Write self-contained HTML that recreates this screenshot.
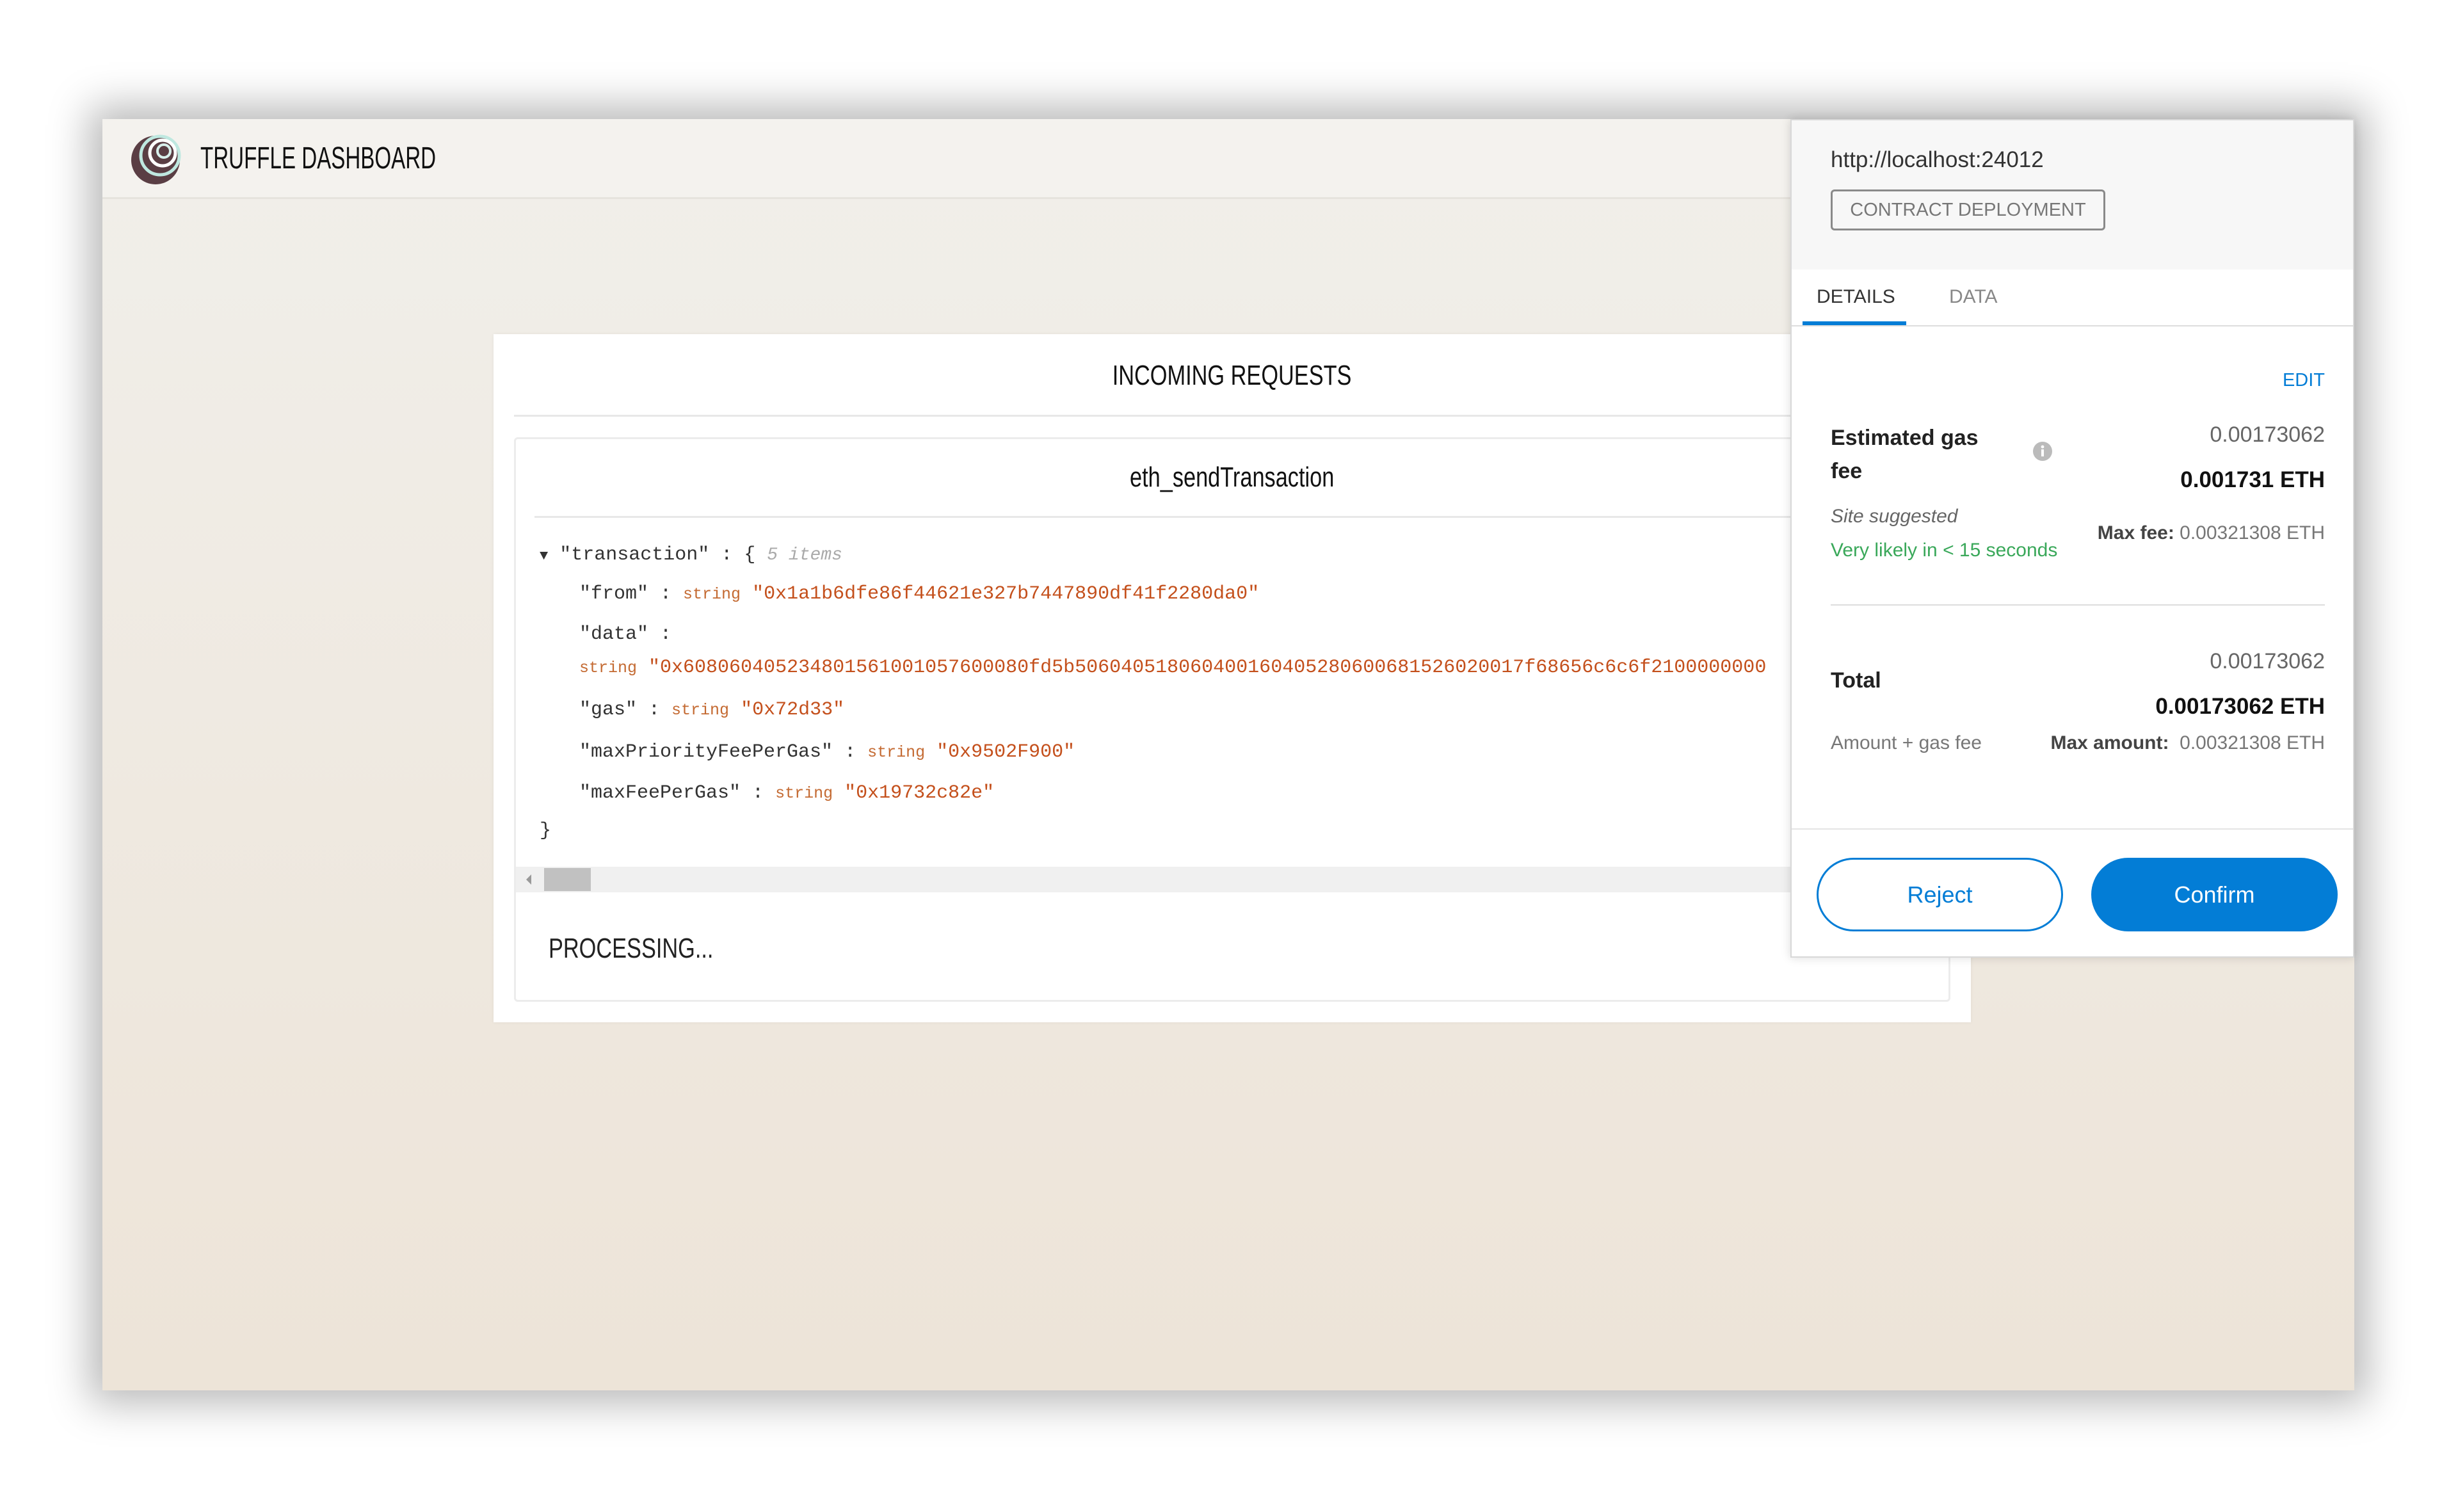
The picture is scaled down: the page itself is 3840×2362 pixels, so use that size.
<!DOCTYPE html>
<html><head><meta charset="utf-8">
<style>
*{margin:0;padding:0;box-sizing:border-box}
body{width:3840px;height:2362px;background:#fff;position:relative;overflow:hidden;font-family:"Liberation Sans",sans-serif}
.a{position:absolute;white-space:nowrap}
.win{position:absolute;left:160px;top:186px;width:3518px;height:1986px;background:linear-gradient(#f1efea,#ede4d8);box-shadow:0 0 60px 20px rgba(0,0,0,0.28)}
.hdr{position:absolute;left:160px;top:186px;width:3518px;height:125px;background:#f4f2ee;border-bottom:3px solid #e6e3dd}
.nar{font-family:"Liberation Sans",sans-serif}
.sq{display:inline-block;transform:scaleX(0.78);transform-origin:center}
.mono{font-family:"Liberation Mono",monospace;font-size:30px;line-height:40px;color:#333}
.s{color:#c46a32;font-size:25px}
.v{color:#c4501c}
.pp{font-family:"Liberation Sans",sans-serif}
</style></head><body>
<div class="win"></div>
<div class="hdr"></div>
<svg class="a" style="left:200px;top:205px" width="86" height="86" viewBox="0 0 86 86">
<circle cx="43" cy="45" r="38" fill="#5a3e44"/>
<circle cx="50" cy="38" r="30" fill="none" stroke="#bfe8e0" stroke-width="5"/>
<circle cx="54" cy="34" r="20" fill="none" stroke="#fff" stroke-width="5"/>
<circle cx="56" cy="31" r="10" fill="none" stroke="#d8f0ec" stroke-width="4"/>
</svg>
<div class="a nar" style="left:313px;top:220px;font-size:48px;line-height:56px;color:#111;transform:scaleX(0.69);transform-origin:left">TRUFFLE DASHBOARD</div>

<div class="a" style="left:771px;top:522px;width:2308px;height:1075px;background:#fff;box-shadow:0 0 6px rgba(0,0,0,0.06)"></div>
<div class="a nar" style="left:771px;top:560px;width:2308px;text-align:center;font-size:44px;line-height:54px;color:#111"><span class="sq">INCOMING REQUESTS</span></div>
<div class="a" style="left:803px;top:648px;width:2244px;height:3px;background:#e8e8e8"></div>
<div class="a" style="left:803px;top:683px;width:2244px;height:882px;border:3px solid #ececec;border-radius:6px;background:#fff"></div>
<div class="a nar" style="left:803px;top:719px;width:2244px;text-align:center;font-size:44px;line-height:54px;color:#111"><span class="sq">eth_sendTransaction</span></div>
<div class="a" style="left:835px;top:806px;width:2212px;height:3px;background:#e8e8e8"></div>

<div class="a mono" style="left:843px;top:847px"><span style="font-size:22px">▼</span> "transaction" : { <span style="color:#aaa;font-style:italic;font-size:28px">5 items</span></div>
<div class="a mono" style="left:905px;top:908px">"from" : <span class="s">string</span> <span class="v">"0x1a1b6dfe86f44621e327b7447890df41f2280da0"</span></div>
<div class="a mono" style="left:905px;top:971px">"data" :</div>
<div class="a mono" style="left:905px;top:1023px"><span class="s">string</span> <span class="v">"0x608060405234801561001057600080fd5b506040518060400160405280600681526020017f68656c6c6f2100000000</span></div>
<div class="a mono" style="left:905px;top:1089px">"gas" : <span class="s">string</span> <span class="v">"0x72d33"</span></div>
<div class="a mono" style="left:905px;top:1155px">"maxPriorityFeePerGas" : <span class="s">string</span> <span class="v">"0x9502F900"</span></div>
<div class="a mono" style="left:905px;top:1219px">"maxFeePerGas" : <span class="s">string</span> <span class="v">"0x19732c82e"</span></div>
<div class="a mono" style="left:843px;top:1278px">}</div>

<div class="a" style="left:806px;top:1354px;width:2000px;height:40px;background:#f0f0f0"></div>
<div class="a" style="left:822px;top:1366px;width:0;height:0;border-top:8px solid transparent;border-bottom:8px solid transparent;border-right:8px solid #999"></div>
<div class="a" style="left:850px;top:1356px;width:73px;height:36px;background:#c1c1c1"></div>
<div class="a nar" style="left:857px;top:1455px;font-size:44px;line-height:54px;color:#222;transform:scaleX(0.78);transform-origin:left">PROCESSING...</div>

<!-- popup -->
<div class="a" style="left:2797px;top:186px;width:881px;height:1310px;background:#fff;border:2px solid #d8d8d8;box-shadow:0 0 14px rgba(0,0,0,0.15)"></div>
<div class="a" style="left:2799px;top:188px;width:877px;height:233px;background:#f7f7f7"></div>
<div class="a pp" style="left:2860px;top:228px;font-size:35px;line-height:44px;color:#333">http://localhost:24012</div>
<div class="a pp" style="left:2860px;top:296px;width:429px;height:64px;border:3px solid #8a8a8a;border-radius:6px;text-align:center;font-size:29px;line-height:58px;color:#777">CONTRACT DEPLOYMENT</div>
<div class="a pp" style="left:2838px;top:445px;font-size:30px;line-height:38px;color:#333">DETAILS</div>
<div class="a pp" style="left:3045px;top:445px;font-size:30px;line-height:38px;color:#888">DATA</div>
<div class="a" style="left:2799px;top:508px;width:877px;height:2px;background:#ddd"></div>
<div class="a" style="left:2816px;top:502px;width:162px;height:6px;background:#037dd6"></div>
<div class="a pp" style="left:3400px;top:576px;width:232px;text-align:right;font-size:29px;line-height:36px;color:#037dd6">EDIT</div>

<div class="a pp" style="left:2860px;top:658px;font-size:34px;line-height:52px;font-weight:bold;color:#222">Estimated gas<br>fee</div>
<svg class="a" style="left:3175px;top:689px" width="32" height="32" viewBox="0 0 32 32"><circle cx="16" cy="16" r="15" fill="#bbb"/><rect x="14" y="13" width="4" height="11" fill="#fff"/><circle cx="16" cy="9" r="2.4" fill="#fff"/></svg>
<div class="a pp" style="left:3300px;top:658px;width:332px;text-align:right;font-size:34px;line-height:42px;color:#666">0.00173062</div>
<div class="a pp" style="left:3200px;top:728px;width:432px;text-align:right;font-size:35px;line-height:44px;font-weight:bold;color:#111">0.001731 ETH</div>
<div class="a pp" style="left:2860px;top:788px;font-size:30px;line-height:38px;font-style:italic;color:#666">Site suggested</div>
<div class="a pp" style="left:2860px;top:841px;font-size:30px;line-height:38px;color:#3aa85a">Very likely in &lt; 15 seconds</div>
<div class="a pp" style="left:3200px;top:814px;width:432px;text-align:right;font-size:30px;line-height:38px;color:#777"><b style="color:#444">Max fee:</b> 0.00321308 ETH</div>
<div class="a" style="left:2860px;top:944px;width:772px;height:2px;background:#ddd"></div>

<div class="a pp" style="left:3300px;top:1012px;width:332px;text-align:right;font-size:34px;line-height:42px;color:#666">0.00173062</div>
<div class="a pp" style="left:2860px;top:1042px;font-size:34px;line-height:42px;font-weight:bold;color:#222">Total</div>
<div class="a pp" style="left:3100px;top:1082px;width:532px;text-align:right;font-size:35px;line-height:44px;font-weight:bold;color:#111">0.00173062 ETH</div>
<div class="a pp" style="left:2860px;top:1142px;font-size:30px;line-height:38px;color:#777">Amount + gas fee</div>
<div class="a pp" style="left:3100px;top:1142px;width:532px;text-align:right;font-size:30px;line-height:38px;color:#777"><b style="color:#444">Max amount:</b>&nbsp; 0.00321308 ETH</div>

<div class="a" style="left:2799px;top:1294px;width:877px;height:2px;background:#e4e4e4"></div>
<div class="a pp" style="left:2838px;top:1340px;width:385px;height:115px;border:3px solid #037dd6;border-radius:58px;text-align:center;font-size:36px;line-height:109px;color:#037dd6">Reject</div>
<div class="a pp" style="left:3267px;top:1340px;width:385px;height:115px;background:#037dd6;border-radius:58px;text-align:center;font-size:36px;line-height:115px;color:#fff">Confirm</div>
</body></html>
